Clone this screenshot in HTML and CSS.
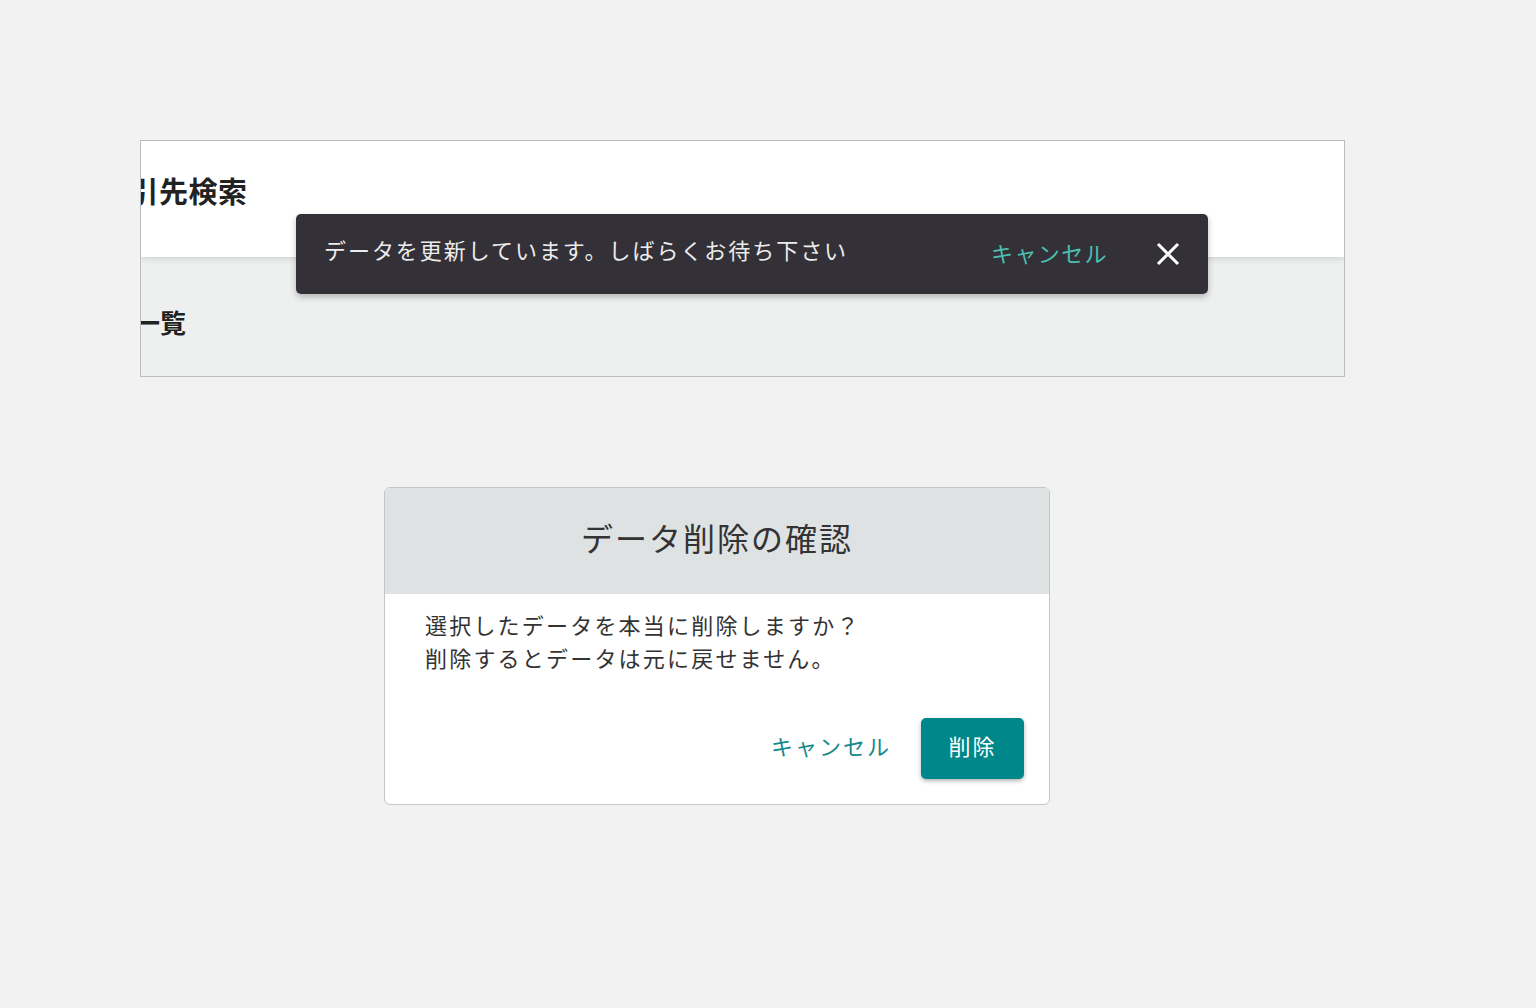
FILE: index.html
```html
<!DOCTYPE html>
<html lang="ja">
<head>
    <meta charset="UTF-8">
    <title>取引先検索</title>
    <link rel="stylesheet" href="styles.css">
</head>
<body>
    <section class="screen">
        <header class="screen-header">
            <h1 class="screen-title">取引先検索</h1>
        </header>
        <div class="screen-body">
            <h2 class="section-title">取引先一覧</h2>
        </div>

        <!-- snackbar shown while data is refreshing -->
        <div class="snackbar">
            <span class="snackbar-text">データを更新しています。しばらくお待ち下さい</span>
            <button class="snackbar-action">キャンセル</button>
            <button class="snackbar-close" aria-label="閉じる">
                <svg width="24" height="24" viewBox="0 0 24 24">
                    <path d="M2 2 L22 22 M22 2 L2 22" stroke="#fff" stroke-width="3" fill="none"/>
                </svg>
            </button>
        </div>
    </section>

    <div class="dialog">
        <div class="dialog-header">データ削除の確認</div>
        <div class="dialog-body">
            <p>選択したデータを本当に削除しますか？</p>
            <p>削除するとデータは元に戻せません。</p>
        </div>
        <div class="dialog-actions">
            <button class="btn-text">キャンセル</button>
            <button class="btn-danger">削除</button>
        </div>
    </div>
</body>
</html>
```

FILE: styles.css
```css
* {
    margin: 0;
    padding: 0;
    box-sizing: border-box;
    font-family: "Noto Sans CJK JP", "Noto Sans", sans-serif;
}

body {
    background: #f2f2f2;
    min-height: 100vh;
    padding: 140px 0 0 140px;
}

button {
    border: none;
    background: none;
    cursor: pointer;
    font-family: inherit;
}

.screen {
    position: relative;
    width: 1205px;
    height: 237px;
    border: 1px solid #bcbcbc;
    display: flex;
    flex-direction: column;
    overflow: hidden;
}

.screen-header {
    height: 116px;
    background: #fff;
    padding-top: 29px;
    box-shadow: 0 2px 6px rgba(0, 0, 0, 0.12);
    position: relative;
    z-index: 1;
}

.screen-title {
    margin-left: -41px;
    font-size: 29px;
    line-height: 40px;
    font-weight: 700;
    letter-spacing: 0.5px;
    color: #222;
    white-space: nowrap;
}

.screen-body {
    flex: 1;
    background: #eef0f0;
    padding-top: 45px;
}

.section-title {
    margin-left: -85px;
    font-size: 26px;
    line-height: 40px;
    font-weight: 700;
    color: #222;
    white-space: nowrap;
}

.snackbar {
    position: absolute;
    left: 155px;
    top: 73px;
    z-index: 2;
    width: 912px;
    height: 80px;
    padding: 0 28px;
    display: flex;
    align-items: center;
    background: #333137;
    border-radius: 5px;
    box-shadow: 0 3px 6px rgba(0, 0, 0, 0.25);
}

.snackbar-text {
    color: #ececec;
    font-size: 22px;
    letter-spacing: 1.95px;
    margin-top: -10px;
}

.snackbar-action {
    margin-left: auto;
    margin-top: -4px;
    color: #4cbfb0;
    font-size: 22px;
    letter-spacing: 1.4px;
}

.snackbar-close {
    margin-left: 48px;
    width: 24px;
    height: 24px;
    display: flex;
}

.dialog {
    margin: 110px 0 0 244px;
    width: 666px;
    background: #fff;
    border: 1px solid #c6c6c6;
    border-radius: 6px;
    overflow: hidden;
}

.dialog-header {
    height: 106px;
    display: flex;
    align-items: center;
    justify-content: center;
    padding-bottom: 8px;
    background: #dfe2e3;
    color: #333;
    font-size: 32px;
    letter-spacing: 2px;
}

.dialog-body {
    padding: 14px 40px 0;
    color: #333;
    font-size: 22px;
    line-height: 33px;
    letter-spacing: 2.2px;
}

.dialog-actions {
    display: flex;
    justify-content: flex-end;
    align-items: center;
    gap: 30px;
    margin-top: 44px;
    padding: 0 25px 25px;
}

.btn-text {
    color: #16898d;
    font-size: 22px;
    letter-spacing: 2px;
    padding-bottom: 8px;
}

.btn-danger {
    width: 103px;
    height: 61px;
    padding-bottom: 8px;
    background: #00878a;
    color: #fff;
    font-size: 22px;
    letter-spacing: 2px;
    border-radius: 5px;
    box-shadow: 0 2px 4px rgba(0, 0, 0, 0.3);
}
```
